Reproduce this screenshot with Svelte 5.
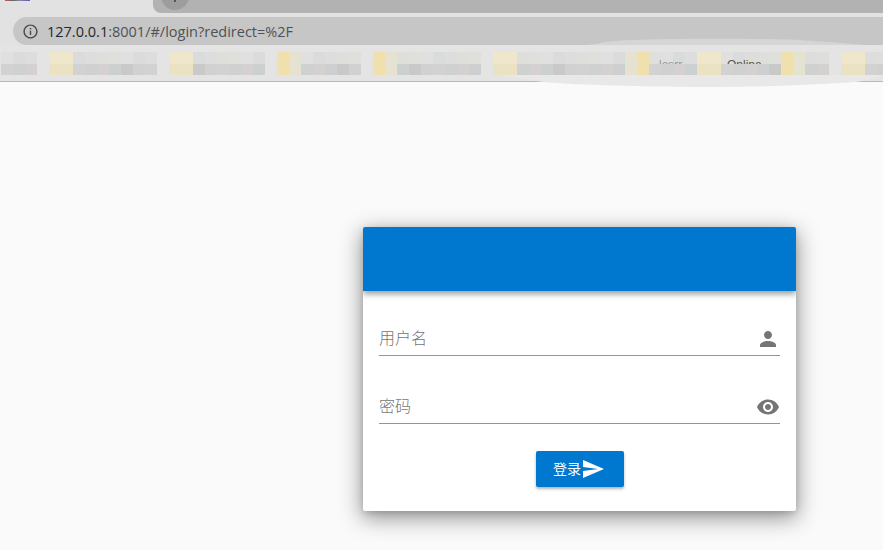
<script>
  const pattern = 'ggg_yyggggggg_yygggggg_spggggg_spggggggg_yygggggggggpsggggyygggggspgg_yygg';
  const topShades = ['#e0e0e0', '#dddddd', '#dfdfdc', '#dadcdc', '#dededb'];
  const botShades = ['#d2d2d2', '#cfd1d1', '#d4d1d0', '#cdd0d0', '#c9c9c9', '#d0d2d2'];
  const colorFor = (c, i, row) => {
    if (c === '_') return '#e4e4e4';
    if (c === 'y') return row ? '#ebe2c4' : '#efe7cc';
    if (c === 's') return '#efe0ad';
    if (c === 'p') return '#e6e2d2';
    return row ? botShades[(i * 7) % botShades.length] : topShades[(i * 3) % topShades.length];
  };
  const cols = pattern.split('').map((c, i) => [colorFor(c, i, 0), colorFor(c, i, 1)]);
</script>

<div class="page">
  <header class="browser">
    <div class="tabstrip">
      <span class="favicon-scrap"></span>
      <div class="tab"><span class="newtab"><span class="dot"></span></span></div>
    </div>
    <div class="omnibox">
      <svg class="info" viewBox="0 0 24 24" width="17" height="17" aria-hidden="true">
        <path fill="#4a4a4a" d="M11 7h2v2h-2zm0 4h2v6h-2zm1-9C6.480 2 2 6.480 2 12s4.480 10 10 10 10-4.480 10-10S17.520 2 12 2zm0 18c-4.410 0-8-3.590-8-8s3.590-8 8-8 8 3.590 8 8-3.590 8-8 8z"/>
      </svg>
      <span class="url"><b>127.0.0.1</b>:8001/#/login?redirect=%2F</span>
    </div>
    <svg class="smudge" viewBox="0 0 883 90" width="883" height="90" aria-hidden="true">
      <path fill="#d5d5d5" d="M530 50 C560 47 590 46 605 42 C625 38 760 38 800 40 C830 42 860 44 872 46 L883 49 L883 52 L530 52 Z"/>
    </svg>
    <div class="bookmarks">
      <div class="mosaic">
        {#each cols as c}
          <span class="cell">
            <i style="background:{c[0]}"></i>
          </span>
        {/each}
      </div>
      <div class="scraps"><span class="s1">losrr</span><span class="s2">Online</span></div>
      <div class="mosaic lower">
        {#each cols as c}
          <span class="cell">
            <i style="background:{c[1]}"></i>
          </span>
        {/each}
      </div>
    </div>
    <svg class="smudge" viewBox="0 0 883 90" width="883" height="90" aria-hidden="true">
      <path fill="#e8e8e8" d="M500 75 L883 75 C878 78 866 81 855 82 C810 85 750 87.500 690 87 C630 86 570 85 540 81.500 Z"/>
    </svg>
  </header>

  <main class="stage">
    <section class="card">
      <div class="banner"></div>
      <form class="form">
        <label class="field">
          <span class="label">用户名</span>
          <svg viewBox="0 0 24 24" width="24" height="24" aria-hidden="true">
            <path fill="#757575" d="M12 12c2.210 0 4-1.790 4-4s-1.790-4-4-4-4 1.790-4 4 1.790 4 4 4zm0 2c-2.670 0-8 1.340-8 4v2h16v-2c0-2.660-5.330-4-8-4z"/>
          </svg>
        </label>
        <label class="field second">
          <span class="label">密码</span>
          <svg viewBox="0 0 24 24" width="24" height="24" aria-hidden="true">
            <path fill="#757575" d="M12 4.500C7 4.500 2.730 7.610 1 12c1.730 4.390 6 7.500 11 7.500s9.270-3.110 11-7.500c-1.730-4.390-6-7.500-11-7.500zM12 17c-2.760 0-5-2.240-5-5s2.240-5 5-5 5 2.240 5 5-2.240 5-5 5zm0-8c-1.660 0-3 1.340-3 3s1.340 3 3 3 3-1.340 3-3-1.340-3-3-3z"/>
          </svg>
        </label>
        <div class="actions">
          <button type="button" class="login">
            <span>登录</span>
            <svg viewBox="0 0 24 24" width="24" height="24" aria-hidden="true">
              <path fill="#fff" d="M2.010 21L23 12 2.010 3 2 10l15 2-15 2z"/>
            </svg>
          </button>
        </div>
      </form>
    </section>
  </main>
</div>

<style>
  :global(body) {
    margin: 0;
    background: #fafafa;
  }
  .page {
    width: 883px;
    height: 550px;
    overflow: hidden;
    background: #fafafa;
    font-family: "Noto Sans CJK SC", "Liberation Sans", sans-serif;
  }
  .browser {
    position: relative;
    height: 82px;
    background: #e2e2e2;
  }
  .tabstrip {
    position: relative;
    height: 13px;
    padding-left: 153px;
  }
  .favicon-scrap {
    position: absolute;
    left: 5px;
    top: 0;
    width: 25px;
    height: 1px;
    background: linear-gradient(90deg, #c55, #666 30%, #889 60%, #55c);
  }
  .tab {
    height: 13px;
    background: #b2b2b2;
    border-bottom-left-radius: 8px;
    overflow: hidden;
  }
  .newtab {
    display: flex;
    justify-content: center;
    width: 28px;
    height: 28px;
    margin: -18px 0 0 8px;
    border-radius: 50%;
    background: #9d9d9d;
  }
  .dot {
    width: 2px;
    height: 20px;
    background: #555;
  }
  .omnibox {
    display: flex;
    align-items: center;
    gap: 8px;
    height: 28px;
    margin: 4px 0 0 13px;
    padding-left: 9px;
    background: #c6c6c6;
    border-radius: 14px 0 0 14px;
  }
  .url {
    font-family: "Open Sans", "Liberation Sans", sans-serif;
    font-size: 14.500px;
    color: #4f5255;
    white-space: nowrap;
  }
  .url b {
    font-weight: 400;
    color: #24272a;
  }
  .bookmarks {
    position: relative;
    height: 37px;
    box-sizing: border-box;
    padding: 7px 0 0 1px;
    background: #e4e4e4;
    border-bottom: 1px solid #b9b9b9;
  }
  .mosaic {
    display: flex;
    height: 12px;
  }
  .mosaic.lower {
    position: relative;
    height: 11px;
  }
  .cell {
    display: block;
    flex: 0 0 12px;
  }
  .cell i {
    display: block;
    height: 100%;
  }
  .smudge {
    position: absolute;
    left: 0;
    top: 0;
    pointer-events: none;
  }
  .scraps {
    position: absolute;
    left: 0;
    top: 14px;
    width: 883px;
    font: 12px/1 "Liberation Sans", sans-serif;
    color: #555;
  }
  .s1,
  .s2 {
    position: absolute;
    top: 0;
  }
  .s1 {
    left: 659px;
    color: #999;
  }
  .s2 {
    left: 727px;
  }
  .stage {
    padding: 145px 0 0 363px;
  }
  .card {
    width: 433px;
    height: 284px;
    background: #fff;
    border-radius: 2px;
    overflow: hidden;
    box-shadow: 0 6px 22px 1px rgba(0, 0, 0, 0.42), 0 2px 6px rgba(0, 0, 0, 0.14);
  }
  .banner {
    position: relative;
    height: 64px;
    background: #0078d0;
    box-shadow: 0 3px 6px rgba(0, 0, 0, 0.4);
  }
  .form {
    display: flex;
    flex-direction: column;
    padding: 0 16px;
  }
  .field {
    display: flex;
    align-items: center;
    justify-content: space-between;
    height: 32px;
    margin-top: 32px;
    border-bottom: 1px solid #949494;
  }
  .field.second {
    margin-top: 35px;
  }
  .label {
    margin-top: -5px;
    font-size: 16px;
    font-weight: 300;
    color: #757575;
  }
  .actions {
    display: flex;
    justify-content: center;
    margin-top: 27px;
  }
  .login {
    display: flex;
    align-items: center;
    justify-content: center;
    width: 88px;
    height: 36px;
    padding: 0;
    border: 0;
    border-radius: 2px;
    background: #0078d0;
    color: #fff;
    font: 14px "Noto Sans CJK SC", sans-serif;
    box-shadow: 0 2px 3px rgba(0, 0, 0, 0.3);
  }
  .login span {
    margin: -2px 0 0 -1px;
  }
</style>
